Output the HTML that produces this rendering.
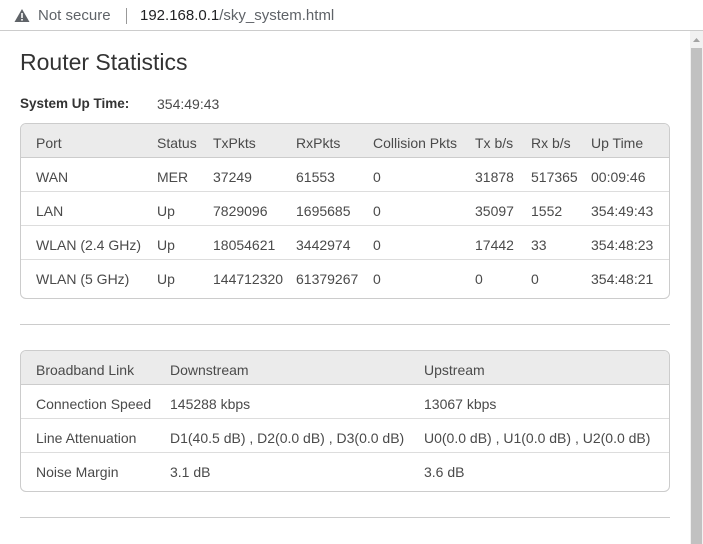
<!DOCTYPE html><html><head><style>
*{margin:0;padding:0;box-sizing:border-box}
body{width:703px;height:544px;overflow:hidden;background:#fff;font-family:"Liberation Sans",sans-serif;color:#4a4a4a;position:relative;font-size:14px}
.a{position:absolute;white-space:nowrap}
.t{margin-top:1px}
.box{position:absolute;left:20px;width:650px;border:1px solid #ccc;border-radius:6px;overflow:hidden}
.hd{background:#ebebeb;height:34px;border-bottom:1px solid #ccc}
.r{height:34px;border-bottom:1px solid #ddd}
.r:last-child{border-bottom:none}
.hr{position:absolute;left:20px;width:650px;height:1px;background:#ccc}
</style></head><body>
<div class="a" style="left:0;top:0;width:703px;height:31px;border-bottom:1px solid #ccc;background:#fff"></div>
<svg class="a" style="left:14px;top:8px" width="16" height="15"><path d="M8 1 L15.5 14 L0.5 14 Z" fill="#5f6368"/><rect x="7.2" y="5" width="1.6" height="5" fill="#fff"/><rect x="7.2" y="11" width="1.6" height="1.6" fill="#fff"/></svg>
<div class="a" style="left:38px;top:7px;font-size:15px;color:#5f6368">Not secure</div>
<div class="a" style="left:126px;top:8px;width:1px;height:16px;background:#999"></div>
<div class="a" style="left:140px;top:7px;font-size:15px;color:#202124">192.168.0.1<span style="color:#5f6368">/sky_system.html</span></div>
<div class="a" style="left:690px;top:31px;width:13px;height:513px;background:#f1f1f1"></div>
<div class="a" style="left:691px;top:48px;width:11px;height:496px;background:#c1c1c1"></div>
<svg class="a" style="left:692px;top:37px" width="9" height="6"><path d="M1 5 L4.5 1 L8 5Z" fill="#a3a3a3"/></svg>

<div class="a" style="left:20px;top:49px;font-size:23px;color:#333">Router Statistics</div>
<div class="a" style="left:20px;top:96px;font-weight:bold;font-size:13.5px;color:#333">System Up Time:</div>
<div class="a" style="left:157px;top:96px">354:49:43</div>

<div class="box" style="top:123px;height:176px">
<div class="hd"></div><div class="r"></div><div class="r"></div><div class="r"></div><div class="r"></div>
</div>
<div class="a" style="left:36px;top:135px">Port</div><div class="a" style="left:157px;top:135px">Status</div><div class="a" style="left:213px;top:135px">TxPkts</div><div class="a" style="left:296px;top:135px">RxPkts</div><div class="a" style="left:373px;top:135px">Collision Pkts</div><div class="a" style="left:475px;top:135px">Tx b/s</div><div class="a" style="left:531px;top:135px">Rx b/s</div><div class="a" style="left:591px;top:135px">Up Time</div>

<div class="a" style="left:36px;top:169px">WAN</div><div class="a" style="left:157px;top:169px">MER</div><div class="a" style="left:213px;top:169px">37249</div><div class="a" style="left:296px;top:169px">61553</div><div class="a" style="left:373px;top:169px">0</div><div class="a" style="left:475px;top:169px">31878</div><div class="a" style="left:531px;top:169px">517365</div><div class="a" style="left:591px;top:169px">00:09:46</div>

<div class="a" style="left:36px;top:203px">LAN</div><div class="a" style="left:157px;top:203px">Up</div><div class="a" style="left:213px;top:203px">7829096</div><div class="a" style="left:296px;top:203px">1695685</div><div class="a" style="left:373px;top:203px">0</div><div class="a" style="left:475px;top:203px">35097</div><div class="a" style="left:531px;top:203px">1552</div><div class="a" style="left:591px;top:203px">354:49:43</div>

<div class="a" style="left:36px;top:237px">WLAN (2.4 GHz)</div><div class="a" style="left:157px;top:237px">Up</div><div class="a" style="left:213px;top:237px">18054621</div><div class="a" style="left:296px;top:237px">3442974</div><div class="a" style="left:373px;top:237px">0</div><div class="a" style="left:475px;top:237px">17442</div><div class="a" style="left:531px;top:237px">33</div><div class="a" style="left:591px;top:237px">354:48:23</div>

<div class="a" style="left:36px;top:271px">WLAN (5 GHz)</div><div class="a" style="left:157px;top:271px">Up</div><div class="a" style="left:213px;top:271px">144712320</div><div class="a" style="left:296px;top:271px">61379267</div><div class="a" style="left:373px;top:271px">0</div><div class="a" style="left:475px;top:271px">0</div><div class="a" style="left:531px;top:271px">0</div><div class="a" style="left:591px;top:271px">354:48:21</div>

<div class="hr" style="top:324px"></div>

<div class="box" style="top:350px;height:142px">
<div class="hd"></div><div class="r"></div><div class="r"></div><div class="r"></div>
</div>
<div class="a" style="left:36px;top:362px">Broadband Link</div><div class="a" style="left:170px;top:362px">Downstream</div><div class="a" style="left:424px;top:362px">Upstream</div>
<div class="a" style="left:36px;top:396px">Connection Speed</div><div class="a" style="left:170px;top:396px">145288 kbps</div><div class="a" style="left:424px;top:396px">13067 kbps</div>
<div class="a" style="left:36px;top:430px">Line Attenuation</div><div class="a" style="left:170px;top:430px">D1(40.5 dB) , D2(0.0 dB) , D3(0.0 dB)</div><div class="a" style="left:424px;top:430px">U0(0.0 dB) , U1(0.0 dB) , U2(0.0 dB)</div>
<div class="a" style="left:36px;top:464px">Noise Margin</div><div class="a" style="left:170px;top:464px">3.1 dB</div><div class="a" style="left:424px;top:464px">3.6 dB</div>

<div class="hr" style="top:517px"></div>
</body></html>
